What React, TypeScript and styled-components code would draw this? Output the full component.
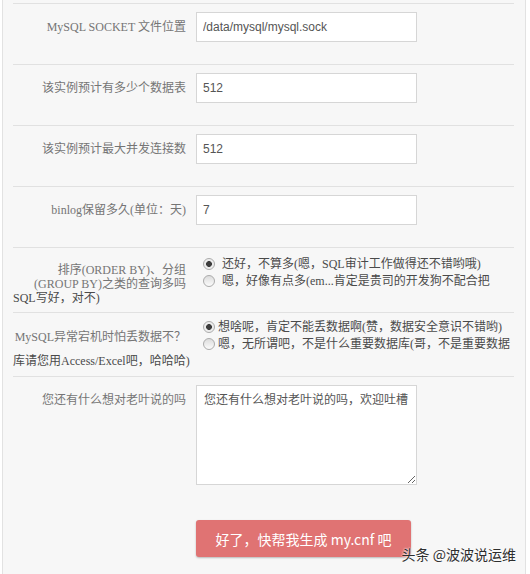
import React from "react";
import styled, { createGlobalStyle } from "styled-components";

const GlobalStyle = createGlobalStyle`
  html, body {
    margin: 0;
    padding: 0;
    background: #ffffff;
  }
  * {
    box-sizing: border-box;
  }
`;

const textFont = `"Liberation Serif", "Noto Sans CJK SC", serif`;
const fieldFont = `"Liberation Sans", Arial, "Noto Sans CJK SC", sans-serif`;

const Panel = styled.div`
  position: relative;
  margin-left: 2px;
  width: 524px;
  min-height: 574px;
  padding: 3px 11px 0 10px;
  background: #f7f7f7;
  border-left: 1px solid #e2e2e2;
  border-right: 1px solid #e2e2e2;
  font-family: ${textFont};
  font-size: 12px;
  overflow: hidden;
`;

const Row = styled.div<{ $pt?: number; $pb?: number; $plain?: boolean }>`
  display: flow-root;
  border-top: ${(p) => (p.$plain ? "none" : "1px solid #e1e1e1")};
  padding-top: ${(p) => p.$pt ?? 8}px;
  padding-bottom: ${(p) => p.$pb ?? 22}px;
`;

const Label = styled.label<{ $pt?: number; $tight?: boolean }>`
  float: left;
  width: 183px;
  padding: ${(p) => p.$pt ?? 8}px 10px 0 0;
  margin-bottom: ${(p) => (p.$tight ? -4 : 0)}px;
  text-align: right;
  line-height: 14px;
  color: #757575;
`;

const TextInput = styled.input`
  display: inline-block;
  width: 221px;
  height: 30px;
  margin: 0;
  padding: 0 6px;
  border: 1px solid #d6d6d6;
  background: #ffffff;
  font-family: ${fieldFont};
  font-size: 12px;
  color: #555555;
  outline: none;
`;

const TextArea = styled.textarea`
  display: inline-block;
  width: 221px;
  height: 100px;
  margin: 0;
  padding: 5px 7px;
  border: 1px solid #d6d6d6;
  background: #ffffff;
  font-family: "Noto Sans CJK SC", sans-serif;
  font-size: 12px;
  line-height: 16px;
  color: #555555;
  outline: none;
`;

const Option = styled.div<{ $gap: number }>`
  line-height: 17px;
  color: #4a4a4a;

  & > input {
    margin-right: ${(p) => p.$gap}px;
  }
`;

const Keep = styled.span`
  white-space: nowrap;
`;

const Radio = styled.input.attrs({ type: "radio" })`
  appearance: none;
  display: inline-block;
  width: 12px;
  height: 12px;
  margin: 0 0 0 7px;
  vertical-align: -2px;
  border: 1px solid #ababab;
  border-radius: 50%;
  background: linear-gradient(#dcdcdc, #fbfbfb);

  &:checked {
    background: radial-gradient(circle, #3d3d3d 0 2.6px, #e9e9e9 3.2px, #fafafa 100%);
  }
`;

const Actions = styled.div`
  padding-left: 183px;
`;

const Submit = styled.button`
  width: 215px;
  height: 37px;
  border: none;
  border-radius: 3px;
  background: #e07373;
  box-shadow: 0 1px 2px rgba(0, 0, 0, 0.25);
  color: #ffffff;
  font-family: "Noto Sans CJK SC", "Liberation Sans", sans-serif;
  font-size: 14px;
  cursor: pointer;
`;

const Watermark = styled.div`
  position: absolute;
  right: 9px;
  top: 545px;
  font-family: "Noto Sans CJK SC", sans-serif;
  font-size: 14px;
  line-height: 18px;
  color: #2e2e2e;
  text-shadow: 0 0 2px #ffffff, 0 0 2px #ffffff;
`;

const inputs = [
  { label: "MySQL SOCKET 文件位置", value: "/data/mysql/mysql.sock" },
  { label: "该实例预计有多少个数据表", value: "512" },
  { label: "该实例预计最大并发连接数", value: "512" },
  { label: "binlog保留多久(单位：天)", value: "7" },
];

export default function App() {
  return (
    <>
      <GlobalStyle />
      <Panel>
        {inputs.map((f) => (
          <Row key={f.label}>
            <Label>{f.label}</Label>
            <TextInput defaultValue={f.value} />
          </Row>
        ))}

        <Row $pt={8} $pb={5}>
          <Label $pt={7} $tight>
            排序(ORDER BY)、分组
            <br />
            (GROUP BY)之类的查询多吗
          </Label>
          <Option $gap={7}>
            <Radio name="order" defaultChecked />
            <Keep>还好，不算多(嗯，SQL审计工作做得还不错哟哦)</Keep>
          </Option>
          <Option $gap={7}>
            <Radio name="order" />
            <Keep>嗯，好像有点多(em...肯定是贵司的开发狗不配合把</Keep>
            <br />
            SQL写好，对不)
          </Option>
        </Row>

        <Row $pt={6} $pb={6}>
          <Label $pt={11} $tight>
            MySQL异常宕机时怕丢数据不？
          </Label>
          <Option $gap={3}>
            <Radio name="crash" defaultChecked />
            <Keep>想啥呢，肯定不能丢数据啊(赞，数据安全意识不错哟)</Keep>
          </Option>
          <Option $gap={3}>
            <Radio name="crash" />
            <Keep>嗯，无所谓吧，不是什么重要数据库(哥，不是重要数据</Keep>
          </Option>
          <Option $gap={0}>库请您用Access/Excel吧，哈哈哈)</Option>
        </Row>

        <Row>
          <Label>您还有什么想对老叶说的吗</Label>
          <TextArea defaultValue="您还有什么想对老叶说的吗，欢迎吐槽" />
        </Row>

        <Row $plain $pt={9} $pb={20}>
          <Actions>
            <Submit type="button">好了，快帮我生成 my.cnf 吧</Submit>
          </Actions>
        </Row>

        <Watermark>头条 @波波说运维</Watermark>
      </Panel>
    </>
  );
}
